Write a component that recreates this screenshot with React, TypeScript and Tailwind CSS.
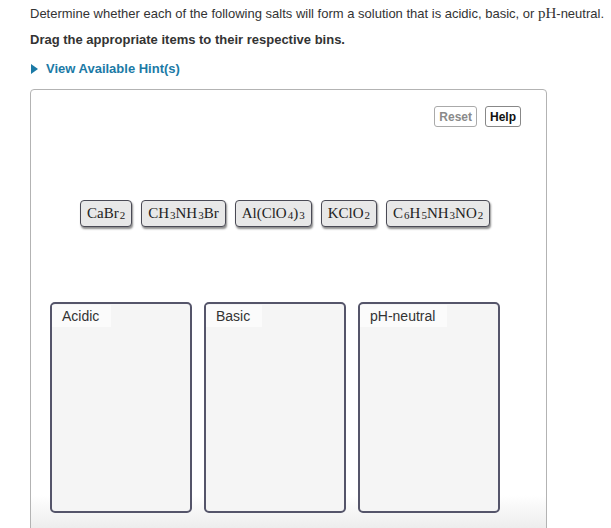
import React from "react";

const serif = { fontFamily: '"Liberation Serif", "DejaVu Serif", serif' };

function Chip({ children }: { children: React.ReactNode }) {
  return (
    <div
      className="h-[27px] px-[6px] flex items-center rounded-[4px] border border-[#4a4a55] bg-[#e8e8e8] text-[15px] text-[#222] shadow-[1px_2px_2px_rgba(0,0,0,0.45)]"
      style={serif}
    >
      {children}
    </div>
  );
}

function Sub({ children }: { children: React.ReactNode }) {
  return <sub className="text-[11px] relative top-[1px] ml-[1px]">{children}</sub>;
}

function Bin({ label }: { label: string }) {
  return (
    <div className="w-[142px] h-[211px] rounded-[5px] border-2 border-[#55556a] bg-[#f5f5f5] overflow-hidden">
      <div className="inline-block bg-[#fbfbfb] pl-[10px] pr-[12px] h-[22px] leading-[22px] text-[14px] text-[#333]">
        {label}
      </div>
    </div>
  );
}

export default function App() {
  return (
    <div
      className="w-[611px] h-[528px] overflow-hidden bg-white text-[#333]"
      style={{ fontFamily: '"Liberation Sans", Arial, Helvetica, sans-serif' }}
    >
      <div className="pl-[30px] pt-[5px]">
        <p className="text-[13px] leading-[16px] whitespace-nowrap">
          Determine whether each of the following salts will form a solution that is acidic, basic, or{" "}
          <span className="text-[15px]" style={serif}>pH</span>-neutral.
        </p>
        <p className="mt-[10px] text-[13px] leading-[16px] font-bold">
          Drag the appropriate items to their respective bins.
        </p>
        <div className="mt-[13px] flex items-center gap-[8px] text-[13px] leading-[16px] font-bold text-[#1b7aa6]">
          <svg width="7" height="10" viewBox="0 0 7 10" className="ml-[1px]">
            <polygon points="0,0 7,5 0,10" fill="#1b7aa6" />
          </svg>
          <span>View Available Hint(s)</span>
        </div>
      </div>

      <div className="ml-[30px] mt-[12px] w-[517px] h-[460px] rounded-t-[4px] border border-[#b3b3b3] bg-[linear-gradient(to_bottom,#ffffff_0,#ffffff_405px,#ececec_440px)]">
        <div className="flex justify-end gap-[8px] pt-[16px] pr-[25px]">
          <button className="h-[21px] px-[4px] rounded-[3px] border border-[#aaa] bg-white text-[12px] font-bold text-[#8a8a8a]">
            Reset
          </button>
          <button className="h-[21px] px-[4px] rounded-[3px] border border-[#888] bg-white text-[12px] font-bold text-[#111]">
            Help
          </button>
        </div>

        <div className="flex gap-[9px] pl-[49px] mt-[73px]">
          <Chip>
            CaBr<Sub>2</Sub>
          </Chip>
          <Chip>
            CH<Sub>3</Sub>NH<Sub>3</Sub>Br
          </Chip>
          <Chip>
            Al(ClO<Sub>4</Sub>)<Sub>3</Sub>
          </Chip>
          <Chip>
            KClO<Sub>2</Sub>
          </Chip>
          <Chip>
            C<Sub>6</Sub>H<Sub>5</Sub>NH<Sub>3</Sub>NO<Sub>2</Sub>
          </Chip>
        </div>

        <div className="flex gap-[12px] pl-[19px] mt-[75px]">
          <Bin label="Acidic" />
          <Bin label="Basic" />
          <Bin label="pH-neutral" />
        </div>
      </div>
    </div>
  );
}
